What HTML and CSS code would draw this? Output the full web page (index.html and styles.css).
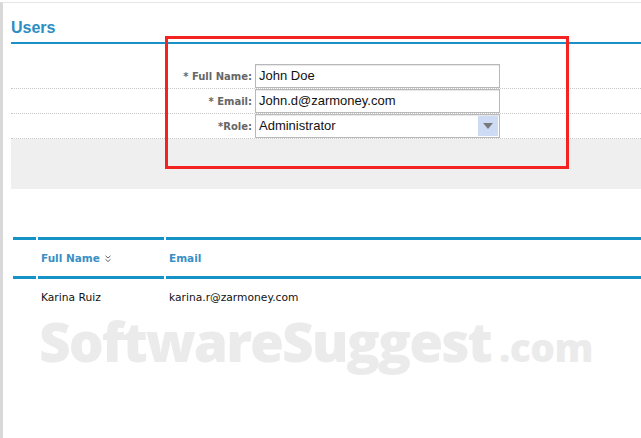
FILE: index.html
```html
<!DOCTYPE html>
<html lang="en">
<head>
    <meta charset="UTF-8">
    <meta name="viewport" content="width=device-width, initial-scale=1.0">
    <title>Users</title>
    <link rel="stylesheet" href="styles.css">
</head>
<body>
    <div class="page">
        <!-- page title -->
        <h1 class="title">Users</h1>

        <!-- user form -->
        <div class="user-form">
            <div class="form-row">
                <label class="form-label">* Full Name:</label>
                <div class="text-input">John Doe</div>
            </div>
            <div class="form-row">
                <label class="form-label">* Email:</label>
                <div class="text-input">John.d@zarmoney.com</div>
            </div>
            <div class="form-row">
                <label class="form-label">*Role:</label>
                <div class="text-input select-input">
                    <span>Administrator</span>
                    <span class="select-arrow"></span>
                </div>
            </div>
        </div>
        <div class="form-footer"></div>

        <!-- user list -->
        <div class="user-table">
            <div class="table-head">
                <div class="cell"></div>
                <div class="cell">Full Name
                    <svg class="sort-icon" width="6" height="8" viewBox="0 0 6 8">
                        <path d="M0.5 0.8 L3 3 L5.5 0.8 M0.5 4.3 L3 6.5 L5.5 4.3" fill="none" stroke="#666" stroke-width="1"/>
                    </svg>
                </div>
                <div class="cell">Email</div>
            </div>
            <div class="table-row">
                <div class="cell"></div>
                <div class="cell">Karina Ruiz</div>
                <div class="cell">karina.r@zarmoney.com</div>
            </div>
        </div>
    </div>

    <!-- highlight box -->
    <div class="highlight"></div>

    <!-- watermark -->
    <div class="watermark">SoftwareSuggest<span class="watermark-tld">.com</span></div>
</body>
</html>
```

FILE: styles.css
```css
body {
    margin: 0;
    background-color: white;
    font-family: "DejaVu Sans", Verdana, sans-serif;
    position: relative;
    height: 438px;
    overflow: hidden;
}
.page {
    margin-top: 2px;
    border-top: 1px solid #e6e6e6;
    border-left: 3px solid #d9d9d9;
    height: 435px;
    padding-left: 8px;
}
.title {
    margin: 0;
    padding-top: 15px;
    padding-bottom: 4px;
    font-family: "Liberation Sans", Arial, sans-serif;
    font-size: 16px;
    line-height: 20px;
    font-weight: bold;
    color: #2b8dc3;
    border-bottom: 2px solid #1b90c6;
}
.user-form {
    padding-top: 20px;
}
.form-row {
    display: flex;
    align-items: center;
    height: 24px;
    border-bottom: 1px dotted #c8c8c8;
}
.form-label {
    width: 241px;
    padding-right: 3px;
    text-align: right;
    font-size: 10px;
    font-weight: bold;
    color: #666;
}
.text-input {
    box-sizing: border-box;
    width: 245px;
    height: 24px;
    border: 1px solid #b8b8b8;
    box-shadow: inset 0 1px 1px #e8e8e8;
    padding-left: 3px;
    font-family: "Liberation Sans", Arial, sans-serif;
    font-size: 13px;
    line-height: 22px;
    color: #111;
}
.select-input {
    display: flex;
    justify-content: space-between;
    padding-right: 1px;
}
.select-arrow {
    width: 20px;
    height: 20px;
    margin-top: 1px;
    background-color: #cddbf5;
    position: relative;
}
.select-arrow::after {
    content: "";
    position: absolute;
    left: 5px;
    top: 7px;
    border-left: 5px solid transparent;
    border-right: 5px solid transparent;
    border-top: 6px solid #7a7a7a;
}
.form-footer {
    height: 50px;
    background-color: #efefef;
}
.user-table {
    margin-top: 48px;
    margin-left: 2px;
}
.table-head,
.table-row {
    display: grid;
    grid-template-columns: 23px 126px 1fr;
    column-gap: 2px;
}
.table-head .cell {
    border-top: 3px solid #1592c6;
    border-bottom: 3px solid #1592c6;
    height: 36px;
    line-height: 36px;
    padding-left: 3px;
    font-size: 10.5px;
    font-weight: bold;
    color: #3a8fc4;
}
.table-row .cell {
    height: 38px;
    line-height: 38px;
    padding-left: 3px;
    font-size: 10.7px;
    color: #111;
}
.sort-icon {
    margin-left: 1px;
    vertical-align: -1px;
}
.highlight {
    position: absolute;
    left: 165px;
    top: 36px;
    width: 398px;
    height: 127px;
    border: 3px solid #f52222;
}
.watermark {
    position: absolute;
    left: 39px;
    top: 303px;
    font-family: "Open Sans", sans-serif;
    font-size: 55px;
    font-weight: 800;
    line-height: 76px;
    letter-spacing: -2px;
    color: #ebebeb;
    white-space: nowrap;
}
.watermark-tld {
    font-size: 39px;
    margin-left: 8px;
    letter-spacing: -0.5px;
}
```
